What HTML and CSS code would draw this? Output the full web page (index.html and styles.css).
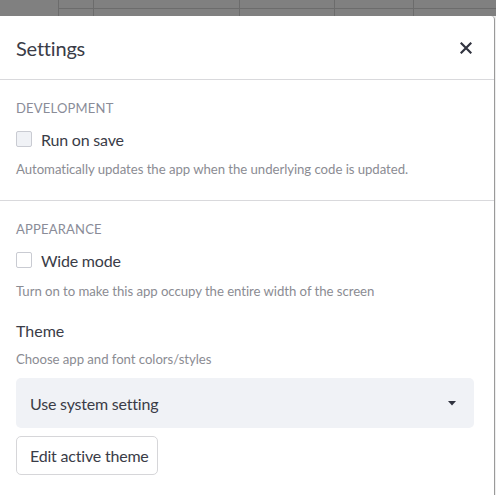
FILE: index.html
```html
<!DOCTYPE html>
<html>
<head>
<meta charset="utf-8">
<link rel="stylesheet" href="styles.css">
</head>
<body>
<div class="backdrop"></div>
<div class="modal">
  <div class="header">
    <div class="title">Settings</div>
    <svg class="close" width="12" height="12" viewBox="0 0 12 12"><path d="M1.5 1.5 L10.5 10.5 M10.5 1.5 L1.5 10.5" stroke="#31333f" stroke-width="2.2" stroke-linecap="square" fill="none"/></svg>
  </div>
  <div class="section first">
    <div class="caption">DEVELOPMENT</div>
    <div class="check-row">
      <span class="box filled"></span>
      <span class="check-label">Run on save</span>
    </div>
    <div class="desc desc-1">Automatically updates the app when the underlying code is updated.</div>
  </div>
  <div class="section">
    <div class="caption">APPEARANCE</div>
    <div class="check-row">
      <span class="box"></span>
      <span class="check-label">Wide mode</span>
    </div>
    <div class="desc desc-2">Turn on to make this app occupy the entire width of the screen</div>
    <div class="theme">Theme</div>
    <div class="desc desc-3">Choose app and font colors/styles</div>
    <div class="select">
      <span>Use system setting</span>
      <svg class="arrow" width="8" height="5" viewBox="0 0 8 5"><path d="M0 0 H8 L4 4.5 Z" fill="#31333f"/></svg>
    </div>
    <div class="button">Edit active theme</div>
  </div>
</div>
</body>
</html>
```

FILE: styles.css
```css
html, body {
  margin: 0;
  padding: 0;
  width: 496px;
  height: 495px;
  overflow: hidden;
  background: #eeeeee;
  font-family: "Lato", "Liberation Sans", sans-serif;
  color: #3a3c47;
}

.backdrop {
  height: 16px;
  background-color: #808080;
  background-image:
    linear-gradient(#6c6c6c, #6c6c6c),
    linear-gradient(#6c6c6c, #6c6c6c),
    linear-gradient(#6c6c6c, #6c6c6c),
    linear-gradient(#6c6c6c, #6c6c6c),
    linear-gradient(#6c6c6c, #6c6c6c),
    linear-gradient(#6c6c6c, #6c6c6c);
  background-size: 1px 16px, 1px 16px, 1px 16px, 1px 16px, 1px 16px, 438px 1px;
  background-position: 58px 0, 93px 0, 239px 0, 334px 0, 413px 0, 58px 8px;
  background-repeat: no-repeat;
  width: 496px;
}

.modal {
  height: 479px;
  background: #ffffff;
  border-right: 1px solid #9a9a9a;
  border-top-right-radius: 4px;
  box-sizing: border-box;
  width: 495px;
}

.header {
  height: 64px;
  box-sizing: border-box;
  padding: 0 22px 0 16px;
  display: flex;
  align-items: center;
  justify-content: space-between;
  border-bottom: 1px solid #d9d9dc;
}

.title {
  font-size: 20px;
  line-height: 24px;
  padding-top: 1px;
  letter-spacing: -0.2px;
}

.close {
  display: block;
  margin-top: 1px;
}

.section {
  padding: 18px 16px 21px 16px;
  border-bottom: 1px solid #d9d9dc;
}

.section:last-child {
  border-bottom: none;
}

.caption {
  font-size: 13px;
  line-height: 20px;
  color: #8a8c98;
  letter-spacing: 0.2px;
}

.check-row {
  display: flex;
  align-items: center;
  height: 24px;
  margin-top: 9px;
}

.box {
  width: 16px;
  height: 16px;
  box-sizing: border-box;
  border: 1px solid #c9cbd2;
  border-radius: 2px;
  background: #ffffff;
  margin-right: 9px;
}

.box.filled {
  background: #f0f2f6;
}

.check-label {
  font-size: 16px;
  letter-spacing: -0.2px;
}

.desc {
  font-size: 13.2px;
  line-height: 20px;
  color: #8b8c93;
  letter-spacing: -0.05px;
}

.desc-1 {
  margin-top: 8px;
}

.desc-2 {
  margin-top: 9px;
}

.theme {
  font-size: 16px;
  line-height: 24px;
  margin-top: 18px;
}

.desc-3 {
  margin-top: 6px;
}

.select {
  margin-top: 9px;
  width: 458px;
  height: 50px;
  box-sizing: border-box;
  background: #f0f2f6;
  border-radius: 5px;
  display: flex;
  align-items: center;
  justify-content: space-between;
  padding: 0 18px 0 14px;
  font-size: 16px;
  letter-spacing: -0.2px;
}

.arrow {
  display: block;
}

.button {
  margin-top: 8px;
  width: 142px;
  height: 39px;
  box-sizing: border-box;
  border: 1px solid #d6d6d9;
  border-radius: 5px;
  display: flex;
  align-items: center;
  padding-left: 13px;
  font-size: 16px;
  letter-spacing: -0.2px;
}
```
